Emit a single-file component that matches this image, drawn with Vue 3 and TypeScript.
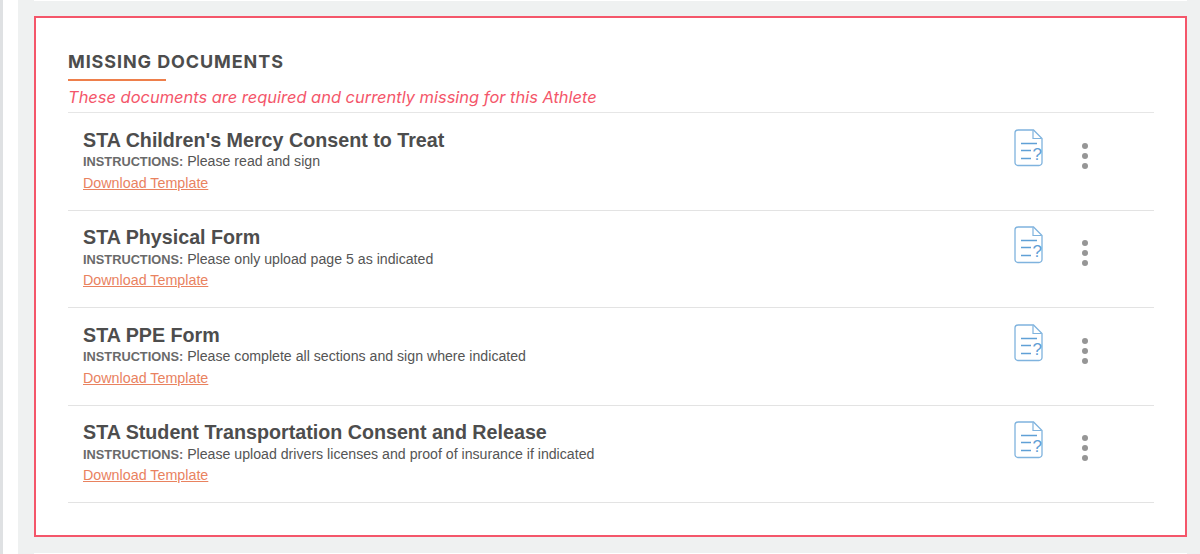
<template>
  <div class="page">
    <div class="strip"></div>
    <div class="gutter"></div>
    <main class="main">
      <div class="edge edge-top"></div>

      <!-- missing documents -->
      <section class="panel">
        <h2 class="heading">MISSING DOCUMENTS</h2>
        <p class="notice">These documents are required and currently missing for this Athlete</p>

        <div v-for="doc in docs" :key="doc.name" class="doc-row">
          <div class="doc-info">
            <div class="doc-name">{{ doc.name }}</div>
            <div class="doc-instructions"><b>INSTRUCTIONS:</b> {{ doc.instructions }}</div>
            <a class="doc-link" href="#">Download Template</a>
          </div>
          <div class="doc-actions">
            <svg class="doc-icon" width="29" height="38" viewBox="0 0 29 38" fill="none">
              <path d="M4 1h15.500L28 9.500V33.500a3 3 0 0 1-3 3H4a3 3 0 0 1-3-3V4a3 3 0 0 1 3-3z" stroke="#7fb3de" stroke-width="1.300" />
              <path d="M19 1.500V9.500H27.500" stroke="#7fb3de" stroke-width="1.200" />
              <path d="M7 14.500H23M7 21.500H17M7 29.500H17" stroke="#5fa0d6" stroke-width="1.300" />
              <text x="18.500" y="30.500" class="doc-icon-mark">?</text>
            </svg>
            <div class="doc-menu">
              <span class="dot"></span>
              <span class="dot"></span>
              <span class="dot"></span>
            </div>
          </div>
        </div>
      </section>

      <div class="edge edge-bottom"></div>
    </main>
  </div>
</template>

<script setup lang="ts">
interface MissingDoc {
  name: string
  instructions: string
}

const docs: MissingDoc[] = [
  { name: "STA Children's Mercy Consent to Treat", instructions: "Please read and sign" },
  { name: "STA Physical Form", instructions: "Please only upload page 5 as indicated" },
  { name: "STA PPE Form", instructions: "Please complete all sections and sign where indicated" },
  { name: "STA Student Transportation Consent and Release", instructions: "Please upload drivers licenses and proof of insurance if indicated" },
]
</script>

<style>
html,
body {
  margin: 0;
  background: #eff1f1;
}
</style>

<style scoped>
.page {
  display: flex;
  height: 554px;
  overflow: hidden;
  font-family: "Liberation Sans", Arial, sans-serif;
  color: #4a4a4a;
}

.strip {
  width: 3px;
  background: #dfe1e3;
}

.gutter {
  width: 15px;
  background: #fff;
}

.main {
  flex: 1;
  padding: 0 13px 0 16px;
  background: #eff1f1;
}

.edge {
  background: #fff;
}

.edge-top {
  height: 1px;
}

.edge-bottom {
  height: 2px;
  margin-top: 16px;
}

.panel {
  box-sizing: border-box;
  height: 521px;
  margin-top: 15px;
  padding: 33px 31px 0 32px;
  background: #fff;
  border: 2px solid #f4566a;
}

.heading {
  width: max-content;
  margin: 0;
  font-family: Inter, sans-serif;
  font-size: 18px;
  font-weight: 700;
  line-height: 22px;
  letter-spacing: 0.9px;
  color: #4d4d4d;
  position: relative;
  padding-bottom: 8px;
}

.heading::after {
  content: "";
  position: absolute;
  left: 0;
  bottom: 0;
  width: 98px;
  height: 2px;
  background: #ee7f4b;
}

.notice {
  margin: 3px 0 0;
  height: 28px;
  font-family: Inter, sans-serif;
  font-size: 16.450px;
  font-style: italic;
  line-height: 27px;
  color: #f4566a;
  border-bottom: 1px solid #e6e6e6;
}

.doc-row {
  display: flex;
  justify-content: space-between;
  height: 96.500px;
  padding-left: 15px;
  border-bottom: 1px solid #e3e3e3;
}

.doc-info {
  padding-top: 15.700px;
}

.doc-name {
  font-size: 19.700px;
  font-weight: 700;
  line-height: 23px;
  color: #4d4d4d;
}

.doc-instructions {
  margin-top: 1.500px;
  font-size: 14.150px;
  line-height: 16px;
  color: #555;
}

.doc-instructions b {
  font-size: 12.800px;
  color: #6a6a6a;
}

.doc-link {
  display: inline-block;
  margin-top: 4.500px;
  font-size: 14.300px;
  line-height: 16px;
  color: #e9825f;
  text-decoration: underline;
}

.doc-actions {
  display: flex;
  align-items: flex-start;
  gap: 39px;
  padding: 15.500px 66px 0 0;
}

.doc-icon {
  display: block;
}

.doc-icon-mark {
  font-family: "Liberation Sans", Arial, sans-serif;
  font-size: 17px;
  fill: #5fa0d6;
}

.doc-menu {
  display: flex;
  flex-direction: column;
  gap: 4px;
  margin-top: 14px;
}

.dot {
  width: 6px;
  height: 6px;
  border-radius: 50%;
  background: #969696;
}
</style>
